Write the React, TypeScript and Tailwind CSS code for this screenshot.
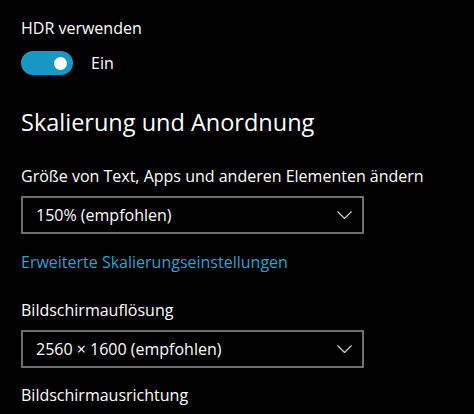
import { useState } from "react";

const Chevron = () => (
  <svg width="15" height="8" viewBox="0 0 15 8" fill="none" className="shrink-0">
    <path d="M0.5 0.5 L7.5 7.5 L14.5 0.5" stroke="#d6d6d6" strokeWidth="1.2" />
  </svg>
);

interface ComboProps {
  value: string;
  className?: string;
}

const Combo: React.FunctionComponent<ComboProps> = ({ value, className }) => (
  <div
    className={`flex h-[38px] w-[343px] items-center justify-between border-2 border-[#6e6e6e] pl-[13px] pr-[10px] ${className ?? ""}`}
  >
    <span className="text-[16px] leading-[20px] text-white">{value}</span>
    <Chevron />
  </div>
);

export default function App() {
  const [hdr, setHdr] = useState(true);

  return (
    <div
      className="h-[414px] w-[474px] overflow-hidden bg-black pl-[21px] text-white"
      style={{ fontFamily: '"Open Sans", "Noto Sans", sans-serif' }}
    >
      <div className="pt-[18px] text-[16px] leading-[20px]">HDR verwenden</div>

      <div className="mt-[13px] flex items-center">
        <button
          onClick={() => setHdr(!hdr)}
          className={`flex h-[24px] w-[52px] items-center rounded-full px-[6px] ${
            hdr ? "justify-end bg-[#1799c4]" : "justify-start border-2 border-white bg-black"
          }`}
        >
          <span className="block h-[13px] w-[13px] rounded-full bg-white" />
        </button>
        <span className="ml-[18px] text-[16px] leading-[20px]">{hdr ? "Ein" : "Aus"}</span>
      </div>

      <h2 className="mt-[32px] text-[23.5px] font-normal leading-[30px]">
        Skalierung und Anordnung
      </h2>

      <div className="mt-[29px] text-[16px] leading-[20px]">
        Größe von Text, Apps und anderen Elementen ändern
      </div>
      <Combo value="150% (empfohlen)" className="mt-[10px]" />

      <div className="mt-[18px] text-[16px] leading-[20px] text-[#2ea3cf]">
        Erweiterte Skalierungseinstellungen
      </div>

      <div className="mt-[28px] text-[16px] leading-[20px]">Bildschirmauflösung</div>
      <Combo value="2560 × 1600 (empfohlen)" className="mt-[10px]" />

      <div className="mt-[17px] text-[16px] leading-[20px]">Bildschirmausrichtung</div>
    </div>
  );
}
